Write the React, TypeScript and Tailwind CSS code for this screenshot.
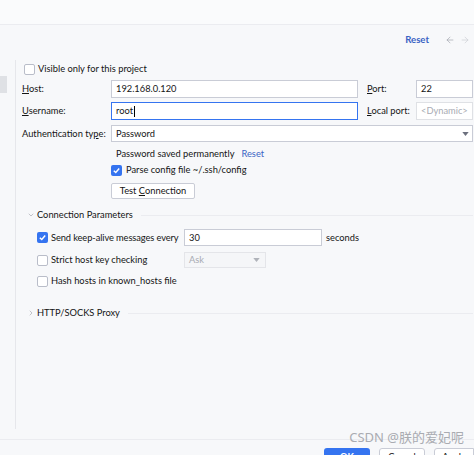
import { ChevronDown, ChevronRight, ArrowLeft, ArrowRight } from "lucide-react";

const FONT = { fontFamily: 'Lato, "Noto Sans", "Noto Sans CJK SC", sans-serif' };

function Check({ on }: { on?: boolean }) {
  return on ? (
    <span className="flex h-[11px] w-[11px] shrink-0 items-center justify-center rounded-[2px] bg-[#3574f0]">
      <svg viewBox="0 0 10 10" className="h-[9px] w-[9px]">
        <path d="M2 5.2 L4.2 7.3 L8 2.8" fill="none" stroke="white" strokeWidth="1.6" />
      </svg>
    </span>
  ) : (
    <span className="h-[11px] w-[11px] shrink-0 rounded-[2px] border border-[#b9bdc9] bg-white" />
  );
}

function Caret({ dim }: { dim?: boolean }) {
  return (
    <svg viewBox="0 0 8 5" className="h-[4px] w-[7px]">
      <path d="M0 0 H8 L4 5 Z" fill={dim ? "#b0b3ba" : "#6c707e"} />
    </svg>
  );
}

export default function App() {
  return (
    <div
      style={FONT}
      className="relative flex h-[455px] w-[474px] flex-col overflow-hidden whitespace-nowrap bg-[#f7f8fa] text-[9.3px] text-[#141414]"
    >
      <div className="h-[25px] shrink-0 border-b border-[#ebecf0] bg-[#fafbfc]" />

      <div className="flex h-[30px] shrink-0 items-center justify-end pr-[4px]">
        <span className="mr-[16px] text-[9.6px] font-bold text-[#3a63c4]">Reset</span>
        <ArrowLeft className="mr-[5px] h-[10px] w-[10px] text-[#9a9da6]" strokeWidth={1.5} />
        <ArrowRight className="h-[10px] w-[10px] text-[#c8cad0]" strokeWidth={1.5} />
      </div>

      <div className="flex flex-1">
        <div className="mt-[5px] flex w-[16px] shrink-0 flex-col border-r border-[#e6e7eb]">
          <div className="mt-[16px] h-[17px] w-[7px] bg-[#dfe1e5]" />
        </div>

        <div className="flex flex-1 flex-col pl-[6px] pr-[2px]">
          <div className="mt-[7px] flex h-[14px] items-center gap-[3px] pl-[2px]">
            <Check />
            <span>Visible only for this project</span>
          </div>

          <div className="mt-[4px] flex h-[18px] items-center">
            <span className="w-[89px]"><u>H</u>ost:</span>
            <div className="flex h-[18px] w-[247px] items-center border border-[#c9ccd6] bg-white px-[4px]">192.168.0.120</div>
            <span className="ml-[9px] w-[49px]"><u>P</u>ort:</span>
            <div className="flex h-[18px] flex-1 items-center border border-[#c9ccd6] bg-white px-[4px]">22</div>
          </div>

          <div className="mt-[4px] flex h-[18px] items-center">
            <span className="w-[89px]"><u>U</u>sername:</span>
            <div className="flex h-[18px] w-[247px] items-center border border-[#3574f0] bg-white px-[4px]">
              root<span className="ml-px h-[11px] w-px bg-black" />
            </div>
            <span className="ml-[9px] w-[49px]"><u>L</u>ocal port:</span>
            <div className="flex h-[18px] flex-1 items-center border border-[#dfe1e5] bg-white px-[4px] text-[#a8abb3]">
              &lt;Dynamic&gt;
            </div>
          </div>

          <div className="mt-[5px] flex h-[17px] items-center">
            <span className="w-[89px]">Authentication ty<u>p</u>e:</span>
            <div className="flex h-[17px] flex-1 items-center justify-between border border-[#c9ccd6] bg-white pl-[4px] pr-[3px]">
              <span>Password</span>
              <Caret />
            </div>
          </div>

          <div className="mt-[5px] flex h-[14px] items-center pl-[94px]">
            <span>Password saved permanently</span>
            <span className="ml-[7px] text-[#3a63c4]">Reset</span>
          </div>

          <div className="mt-[2px] flex h-[14px] items-center gap-[4px] pl-[89px]">
            <Check on />
            <span>Parse config file ~/.ssh/config</span>
          </div>

          <div className="mt-[6px] flex pl-[89px]">
            <div className="flex h-[16px] w-[84px] items-center justify-center rounded-[2px] border border-[#c9ccd6] bg-white">
              Test&nbsp;<u>C</u>onnection
            </div>
          </div>

          <div className="mt-[9px] flex h-[14px] items-center">
            <ChevronDown className="ml-[5px] h-[8px] w-[8px] text-[#8c8f98]" strokeWidth={1.5} />
            <span className="ml-[2px]">Connection Parameters</span>
            <div className="ml-[8px] h-px flex-1 bg-[#ebecf0]" />
          </div>

          <div className="mt-[7px] flex h-[17px] items-center pl-[15px]">
            <Check on />
            <span className="ml-[3px] w-[133px] tracking-[-0.1px]">Send keep-alive messages every</span>
            <div className="flex h-[17px] w-[138px] items-center border border-[#c9ccd6] bg-white px-[4px]">30</div>
            <span className="ml-[4px]">seconds</span>
          </div>

          <div className="mt-[6px] flex h-[16px] items-center pl-[15px]">
            <Check />
            <span className="ml-[3px] w-[133px]">Strict host key checking</span>
            <div className="flex h-[16px] w-[82px] items-center justify-between border border-[#e4e5e9] bg-[#f5f6f8] pl-[4px] pr-[5px] text-[#a8abb3]">
              <span>Ask</span>
              <Caret dim />
            </div>
          </div>

          <div className="mt-[6px] flex h-[14px] items-center pl-[15px]">
            <Check />
            <span className="ml-[3px]">Hash hosts in known_hosts file</span>
          </div>

          <div className="mt-[18px] flex h-[14px] items-center">
            <ChevronRight className="ml-[5px] h-[8px] w-[8px] text-[#8c8f98]" strokeWidth={1.5} />
            <span className="ml-[2px]">HTTP/SOCKS Proxy</span>
            <div className="ml-[8px] h-px flex-1 bg-[#ebecf0]" />
          </div>
        </div>
      </div>

      <div className="h-[10px] shrink-0" />
      <div className="relative h-[16px] shrink-0 border-t border-[#ebecf0] bg-[#f7f8fa]">
        <div className="flex justify-end gap-[9px] pt-[8px]">
          <div className="flex h-[18px] w-[46px] items-center justify-center rounded-[3px] bg-[#3574f0] font-bold text-white">OK</div>
          <div className="flex h-[18px] w-[46px] items-center justify-center rounded-[3px] border border-[#c9ccd6] bg-white">Cancel</div>
          <div className="flex h-[18px] w-[40px] items-center justify-center rounded-l-[3px] border border-[#c9ccd6] bg-white">Apply</div>
        </div>
        <span
          className="absolute right-[10px] top-[-12px] text-[13px] text-[#a9abb1]"
          style={{ fontFamily: '"Noto Sans", "Noto Sans CJK SC", sans-serif' }}
        >
          CSDN @朕的爱妃呢
        </span>
      </div>
    </div>
  );
}
